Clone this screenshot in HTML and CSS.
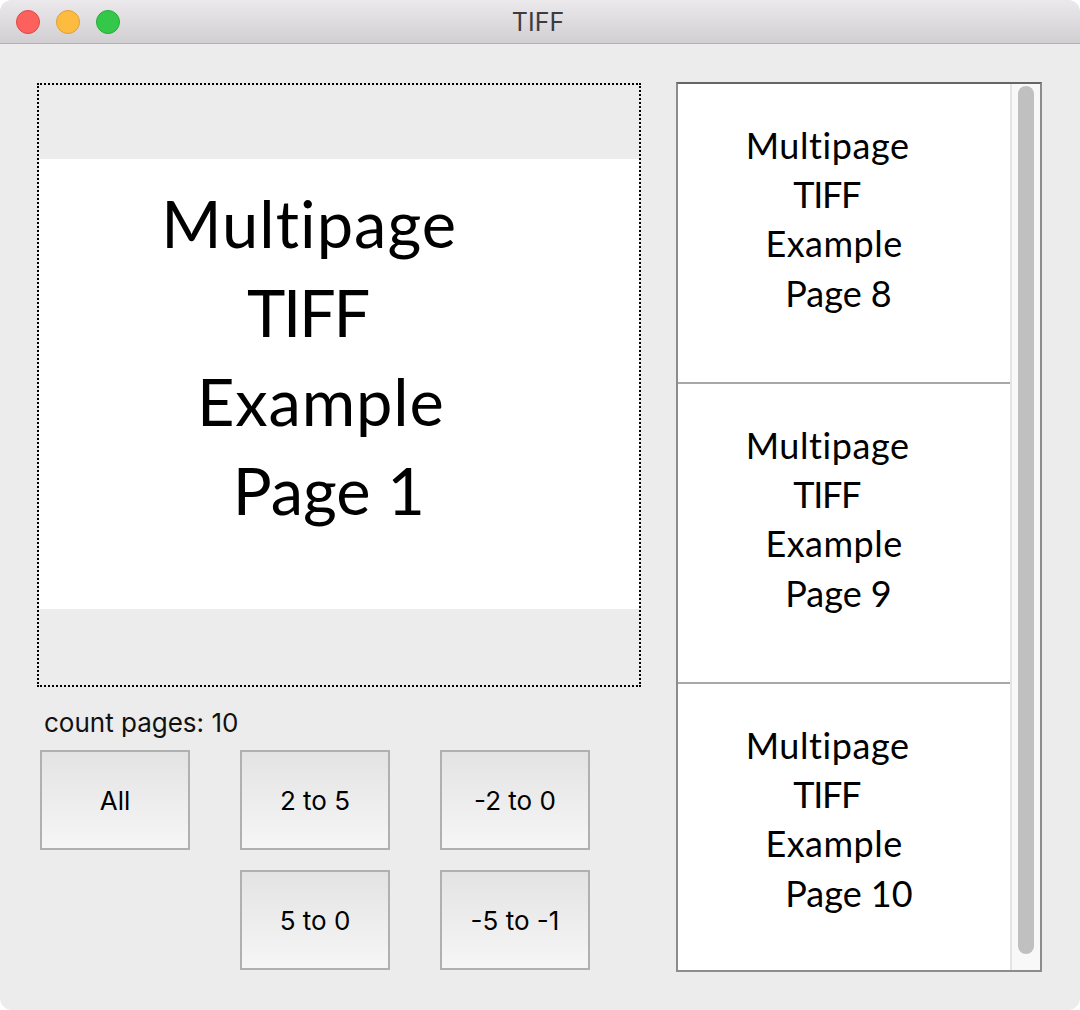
FILE: index.html
```html
<!DOCTYPE html>
<html lang="en">

<head>
  <meta charset="UTF-8">
  <title>TIFF</title>
  <link rel="stylesheet" href="styles.css">
</head>

<body>
  <div class="window">
    <div class="titlebar">
      <div class="lights">
        <span class="light light-close"></span>
        <span class="light light-min"></span>
        <span class="light light-max"></span>
      </div>
      <div class="title">TIFF</div>
    </div>

    <div class="main">
      <div class="left">
        <div class="viewer">
          <div class="page">
            <div class="line line-one">Multipage</div>
            <div class="line line-two">TIFF</div>
            <div class="line line-three">Example</div>
            <div class="line line-four">Page 1</div>
          </div>
        </div>
        <div class="count">count pages: 10</div>
        <div class="buttons">
          <button class="btn">All</button>
          <button class="btn">2 to 5</button>
          <button class="btn">-2 to 0</button>
          <button class="btn btn-second">5 to 0</button>
          <button class="btn">-5 to -1</button>
        </div>
      </div>

      <div class="list">
        <div class="items">
          <div class="item">
            <div class="page thumb">
              <div class="line line-one">Multipage</div>
              <div class="line line-two">TIFF</div>
              <div class="line line-three">Example</div>
              <div class="line line-four">Page 8</div>
            </div>
          </div>
          <div class="item">
            <div class="page thumb">
              <div class="line line-one">Multipage</div>
              <div class="line line-two">TIFF</div>
              <div class="line line-three">Example</div>
              <div class="line line-four">Page 9</div>
            </div>
          </div>
          <div class="item">
            <div class="page thumb">
              <div class="line line-one">Multipage</div>
              <div class="line line-two">TIFF</div>
              <div class="line line-three">Example</div>
              <div class="line line-four">Page 10</div>
            </div>
          </div>
        </div>
        <div class="scrollbar">
          <div class="scroll-thumb"></div>
        </div>
      </div>
    </div>
  </div>
</body>

</html>
```

FILE: styles.css
```css
html,
body {
  margin: 0;
  height: 1010px;
  width: 1080px;
  background: #fff;
  overflow: hidden;
  font-family: Inter, 'Liberation Sans', sans-serif;
}

.window {
  height: 1010px;
  background: #ececec;
  border-radius: 12px;
  overflow: hidden;
}

.titlebar {
  height: 43px;
  display: flex;
  align-items: center;
  padding-left: 16px;
  background: linear-gradient(#ebe9ec, #d1cfd2);
  border-bottom: 1px solid #b1afb1;
}

.lights {
  display: flex;
  gap: 16px;
  width: 104px;
}

.light {
  width: 22px;
  height: 22px;
  border-radius: 50%;
  border: 1px solid;
}

.light-close {
  background: #fc615d;
  border-color: #df4744;
}

.light-min {
  background: #fdbc40;
  border-color: #de9f34;
}

.light-max {
  background: #34c84a;
  border-color: #27aa35;
}

.title {
  width: 836px;
  text-align: center;
  font-size: 25px;
  color: #3d3b3e;
}

.main {
  display: flex;
  align-items: flex-start;
  gap: 35px;
  padding: 38px 0 0 37px;
}

.left {
  width: 604px;
  margin-top: 1px;
}

.viewer {
  box-sizing: border-box;
  width: 604px;
  height: 604px;
  border: 2px dotted #000;
  padding-bottom: 2px;
  display: flex;
  align-items: center;
}

.page {
  box-sizing: border-box;
  width: 600px;
  height: 450px;
  padding-top: 0.3em;
  background: #fff;
  color: #000;
  font-family: Lato, 'Open Sans', sans-serif;
  font-variant-ligatures: none;
  font-size: 65px;
  line-height: 1.37;
}

.page.thumb {
  width: 332px;
  height: 250px;
  padding-top: 0.35em;
  font-size: 36px;
}

.line-one {
  margin-left: 1.88em;
  letter-spacing: 0.016em;
}

.line-two {
  margin-left: 3.2em;
  letter-spacing: -0.035em;
}

.line-three {
  margin-left: 2.43em;
  letter-spacing: 0.013em;
}

.line-four {
  margin-left: 2.98em;
}

.count {
  height: 63px;
  line-height: 72px;
  padding-left: 7px;
  font-size: 26px;
  color: #111;
}

.buttons {
  display: grid;
  grid-template-columns: repeat(3, 150px);
  grid-auto-rows: 100px;
  column-gap: 50px;
  row-gap: 20px;
  margin-left: 3px;
}

.btn {
  border: 2px solid #b0b0b0;
  background: linear-gradient(#e3e3e3, #f6f6f6);
  font-family: inherit;
  font-size: 26px;
  color: #000;
  padding: 0;
}

.btn-second {
  grid-column: 2;
}

.list {
  box-sizing: border-box;
  width: 366px;
  height: 890px;
  display: flex;
  border: 2px solid #8c8c8c;
  border-top-color: #666;
  background: #fff;
  overflow: hidden;
}

.items {
  width: 332px;
  flex: none;
}

.item {
  box-sizing: border-box;
  height: 300px;
  display: flex;
  align-items: center;
  border-bottom: 2px solid #a8a8a8;
}

.scrollbar {
  box-sizing: border-box;
  width: 30px;
  flex: none;
  background: #f8f8f8;
  border-left: 2px solid #e4e4e4;
  padding: 2px 6px 0;
}

.scroll-thumb {
  height: 868px;
  background: #c0c0c0;
  border-radius: 8px;
}
```
